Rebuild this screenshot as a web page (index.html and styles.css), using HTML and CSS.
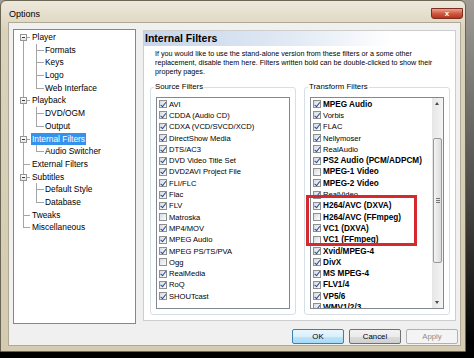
FILE: index.html
```html
<!DOCTYPE html>
<html lang="en">
    <head>
        <meta charset="UTF-8" />
        <meta name="viewport" content="width=device-width, initial-scale=1.0" />
        <title>Options</title>
        <link rel="stylesheet" href="styles.css">
    </head>
    <body>
        <div class="window">
            <div class="titlebar">
                <span class="title">Options</span>
                <span class="close">x</span>
            </div>
            <div class="client">
                <div class="main">
                    <ul class="tree">
                        <li><span class="row"><span class="toggle"></span>Player</span>
                            <ul>
                                <li><span class="row">Formats</span></li>
                                <li><span class="row">Keys</span></li>
                                <li><span class="row">Logo</span></li>
                                <li><span class="row">Web Interface</span></li>
                            </ul>
                        </li>
                        <li><span class="row"><span class="toggle"></span>Playback</span>
                            <ul>
                                <li><span class="row">DVD/OGM</span></li>
                                <li><span class="row">Output</span></li>
                            </ul>
                        </li>
                        <li><span class="row"><span class="toggle"></span><span class="selected">Internal Filters</span></span>
                            <ul>
                                <li><span class="row">Audio Switcher</span></li>
                            </ul>
                        </li>
                        <li><span class="row">External Filters</span></li>
                        <li><span class="row"><span class="toggle"></span>Subtitles</span>
                            <ul>
                                <li><span class="row">Default Style</span></li>
                                <li><span class="row">Database</span></li>
                            </ul>
                        </li>
                        <li><span class="row">Tweaks</span></li>
                        <li><span class="row">Miscellaneous</span></li>
                    </ul>

                    <div class="page">
                        <div class="page-head">Internal Filters</div>
                        <p class="page-desc">If you would like to use the stand-alone version from these filters or a some other<br>
                            replacement, disable them here. Filters written bold can be double-clicked to show their<br>
                            property pages.</p>
                        <div class="groups">
                            <div class="group">
                                <div class="group-title">Source Filters</div>
                                <div class="list">
                                    <div class="items">
                                        <div class="item"><span class="check on"></span>AVI</div>
                                        <div class="item"><span class="check on"></span>CDDA (Audio CD)</div>
                                        <div class="item"><span class="check on"></span>CDXA (VCD/SVCD/XCD)</div>
                                        <div class="item"><span class="check on"></span>DirectShow Media</div>
                                        <div class="item"><span class="check on"></span>DTS/AC3</div>
                                        <div class="item"><span class="check on"></span>DVD Video Title Set</div>
                                        <div class="item"><span class="check on"></span>DVD2AVI Project File</div>
                                        <div class="item"><span class="check on"></span>FLI/FLC</div>
                                        <div class="item"><span class="check on"></span>Flac</div>
                                        <div class="item"><span class="check on"></span>FLV</div>
                                        <div class="item"><span class="check"></span>Matroska</div>
                                        <div class="item"><span class="check on"></span>MP4/MOV</div>
                                        <div class="item"><span class="check on"></span>MPEG Audio</div>
                                        <div class="item"><span class="check on"></span>MPEG PS/TS/PVA</div>
                                        <div class="item"><span class="check"></span>Ogg</div>
                                        <div class="item"><span class="check on"></span>RealMedia</div>
                                        <div class="item"><span class="check on"></span>RoQ</div>
                                        <div class="item"><span class="check on"></span>SHOUTcast</div>
                                    </div>
                                </div>
                            </div>

                            <div class="group">
                                <div class="group-title">Transform Filters</div>
                                <div class="list">
                                    <div class="items">
                                        <div class="item bold"><span class="check on"></span>MPEG Audio</div>
                                        <div class="item"><span class="check on"></span>Vorbis</div>
                                        <div class="item"><span class="check on"></span>FLAC</div>
                                        <div class="item"><span class="check on"></span>Nellymoser</div>
                                        <div class="item"><span class="check on"></span>RealAudio</div>
                                        <div class="item bold"><span class="check on"></span>PS2 Audio (PCM/ADPCM)</div>
                                        <div class="item bold"><span class="check"></span>MPEG-1 Video</div>
                                        <div class="item bold"><span class="check on"></span>MPEG-2 Video</div>
                                        <div class="item"><span class="check on"></span>RealVideo</div>
                                        <div class="item bold"><span class="check on"></span>H264/AVC (DXVA)</div>
                                        <div class="item bold"><span class="check"></span>H264/AVC (FFmpeg)</div>
                                        <div class="item bold"><span class="check on"></span>VC1 (DXVA)</div>
                                        <div class="item bold"><span class="check"></span>VC1 (FFmpeg)</div>
                                        <div class="item bold"><span class="check on"></span>Xvid/MPEG-4</div>
                                        <div class="item bold"><span class="check on"></span>DivX</div>
                                        <div class="item bold"><span class="check on"></span>MS MPEG-4</div>
                                        <div class="item bold"><span class="check on"></span>FLV1/4</div>
                                        <div class="item bold"><span class="check on"></span>VP5/6</div>
                                        <div class="item bold"><span class="check on"></span>WMV1/2/3</div>
                                    </div>
                                    <div class="scrollbar">
                                        <span class="sb-btn up"></span>
                                        <span class="sb-track"><span class="sb-thumb"></span></span>
                                        <span class="sb-btn down"></span>
                                    </div>
                                </div>
                                <div class="highlight"></div>
                            </div>
                        </div>
                    </div>
                </div>

                <div class="buttons">
                    <button class="btn default">OK</button>
                    <button class="btn">Cancel</button>
                    <button class="btn disabled">Apply</button>
                </div>
            </div>
        </div>
    </body>
</html>
```

FILE: styles.css
```css
:root {
  --ui: "Liberation Sans", Arial, sans-serif;
  --tree-line: #a5a5a5;
  --group-border: #d5dfe5;
  --list-border: #828790;
  --check: #2d4b8e;
}

* {
  box-sizing: border-box;
}

body {
  margin: 0;
  width: 474px;
  height: 358px;
  overflow: hidden;
  background: linear-gradient(#a09d97, #4a4945 55%, #000 96%);
  font-family: var(--ui);
  color: #000;
}

/* window frame */
.window {
  width: 466px;
  height: 352px;
  border: 1px solid #6b6553;
  border-radius: 6px 6px 0 0;
  padding: 0 4px 5px 7px;
  background: linear-gradient(#eee9dc, #dad2bc 30px, #d4cbb1);
  display: flex;
  flex-direction: column;
}

.titlebar {
  display: flex;
  align-items: flex-start;
  height: 21px;
  margin: 0 -4px 0 -7px;
  padding: 8px 2px 0 8px;
}

.title {
  font-size: 9px;
  line-height: 11px;
}

.close {
  margin-left: auto;
  margin-top: -1px;
  width: 32px;
  height: 11px;
  border: 1px solid #7a2f22;
  border-radius: 0 0 3px 3px;
  background: linear-gradient(#eaa28f, #d25a43 50%, #b8321b);
  color: #fff;
  font: bold 8px/9px var(--ui);
  text-align: center;
}

.client {
  flex: 1;
  border: 1px solid #b0a993;
  background: #f0f0f0;
  padding: 6px 2px 1px 4px;
  display: flex;
  flex-direction: column;
}

.main {
  display: flex;
  align-items: flex-start;
  gap: 7px;
  height: 295px;
}

/* tree */
.tree {
  flex: none;
  list-style: none;
  margin: 0;
  padding: 1px 0 0;
  width: 123px;
  height: 295px;
  border: 1px solid var(--list-border);
  background: #fff;
  font-size: 8.4px;
  line-height: 12.7px;
}

.tree ul {
  list-style: none;
  margin: 0;
  padding: 0;
  position: relative;
}

.tree li {
  position: relative;
}

.tree .row {
  display: block;
  position: relative;
  height: 12.7px;
  padding-left: 18px;
  white-space: nowrap;
}

.tree ul .row {
  padding-left: 31px;
}

.tree > li::before {
  content: "";
  position: absolute;
  left: 9px;
  top: 0;
  bottom: 0;
  border-left: 1px solid var(--tree-line);
}

.tree > li:first-child::before {
  top: 6px;
}

.tree > li:last-child::before {
  bottom: auto;
  height: 6px;
}

.tree .row::before {
  content: "";
  position: absolute;
  left: 9px;
  top: 6px;
  width: 7px;
  border-top: 1px solid var(--tree-line);
}

.tree ul::before {
  content: "";
  position: absolute;
  left: 22px;
  top: 0;
  bottom: 6px;
  border-left: 1px solid var(--tree-line);
}

.tree ul .row::before {
  left: 22px;
  width: 8px;
}

.toggle {
  position: absolute;
  left: 6px;
  top: 3px;
  width: 7px;
  height: 7px;
  border: 1px solid #959595;
  background: linear-gradient(#fff, #e4e4e4);
  z-index: 1;
}

.toggle::after {
  content: "";
  position: absolute;
  left: 1px;
  top: 2px;
  width: 3px;
  height: 1px;
  background: #3a3a3a;
}

.selected {
  margin-left: -1px;
  padding: 0 1px;
  display: inline-block;
  background: #3592ec;
  color: #fff;
}

/* property page */
.page {
  flex: 1;
  min-width: 0;
  height: 291px;
  margin: 1px 2px 0 0;
  border: 1px solid #cdcdcd;
  background: #fff;
}

.page-head {
  height: 15px;
  padding-left: 1px;
  background: linear-gradient(to right, #c5d5eb, #e3ebf5 50%, #fff 80%);
  font: bold 10.5px/15px var(--ui);
}

.page-desc {
  margin: 2.5px 0 0 11px;
  font-size: 7.2px;
  line-height: 9px;
  white-space: nowrap;
}

.groups {
  display: flex;
  gap: 8px;
  margin: 11.5px 5px 0 6px;
}

.group {
  position: relative;
  flex: 1;
  border: 1px solid var(--group-border);
  border-radius: 3px;
  padding: 0 5px 5px;
}

.group-title {
  width: fit-content;
  height: 10px;
  margin: -6px 0 0 -2px;
  padding: 0 1px;
  background: #fff;
  font-size: 7.8px;
  line-height: 10px;
}

.list {
  display: flex;
  height: 212px;
  margin-top: 5px;
  border: 1px solid var(--list-border);
  background: #fff;
}

.items {
  flex: 1;
  overflow: hidden;
  padding-top: 0.5px;
}

.item {
  display: flex;
  align-items: center;
  height: 11.3px;
  font-size: 7.6px;
  white-space: nowrap;
}

.item.bold {
  font-weight: bold;
  font-size: 8.2px;
}

.check {
  position: relative;
  flex: none;
  width: 8px;
  height: 8px;
  margin: 0 2px;
  border: 1px solid #8e8f8f;
  background: linear-gradient(135deg, #d6dbe2, #fdfdfd);
}

.check.on::after {
  content: "";
  position: absolute;
  left: 2px;
  top: -0.5px;
  width: 2px;
  height: 4.5px;
  border: solid var(--check);
  border-width: 0 1.3px 1.3px 0;
  transform: rotate(38deg);
}

/* scrollbar */
.scrollbar {
  width: 11px;
  display: flex;
  flex-direction: column;
  background: linear-gradient(to right, #e6e6e6, #f4f4f4);
}

.sb-btn {
  position: relative;
  height: 11px;
}

.sb-btn::after {
  content: "";
  position: absolute;
  left: 3px;
  top: 4px;
  border-left: 2.5px solid transparent;
  border-right: 2.5px solid transparent;
}

.sb-btn.up::after {
  border-bottom: 3px solid #4a4a4a;
}

.sb-btn.down::after {
  border-top: 3px solid #4a4a4a;
}

.sb-track {
  flex: 1;
  padding-top: 29px;
}

.sb-thumb {
  display: block;
  position: relative;
  height: 125px;
  margin: 0 1px;
  border: 1px solid #999;
  border-radius: 2px;
  background: linear-gradient(to right, #f4f4f4, #dcdcdc);
}

.sb-thumb::after {
  content: "";
  position: absolute;
  left: 2px;
  top: 59px;
  width: 4px;
  height: 5px;
  background: repeating-linear-gradient(#777 0 1px, transparent 1px 2px);
}

.highlight {
  position: absolute;
  left: 1px;
  top: 107px;
  width: 111px;
  height: 51px;
  border: 3px solid #d42a2e;
}

/* dialog buttons */
.buttons {
  display: flex;
  justify-content: flex-end;
  gap: 5px;
  margin-top: 5px;
}

.btn {
  width: 52px;
  height: 15px;
  padding: 0;
  border: 1px solid #707070;
  border-radius: 2px;
  background: linear-gradient(#f2f2f2, #ebebeb 50%, #dddddd 50%, #cfcfcf);
  font: 7.8px/13px var(--ui);
  color: #000;
}

.btn.default {
  border-color: #3c7fb1;
  background: linear-gradient(#eaf6fd, #d9f0fc 50%, #bee6fd 50%, #a7d9f5);
}

.btn.disabled {
  border-color: #adb2b5;
  background: #f4f4f4;
  color: #8d8d8d;
}
```
